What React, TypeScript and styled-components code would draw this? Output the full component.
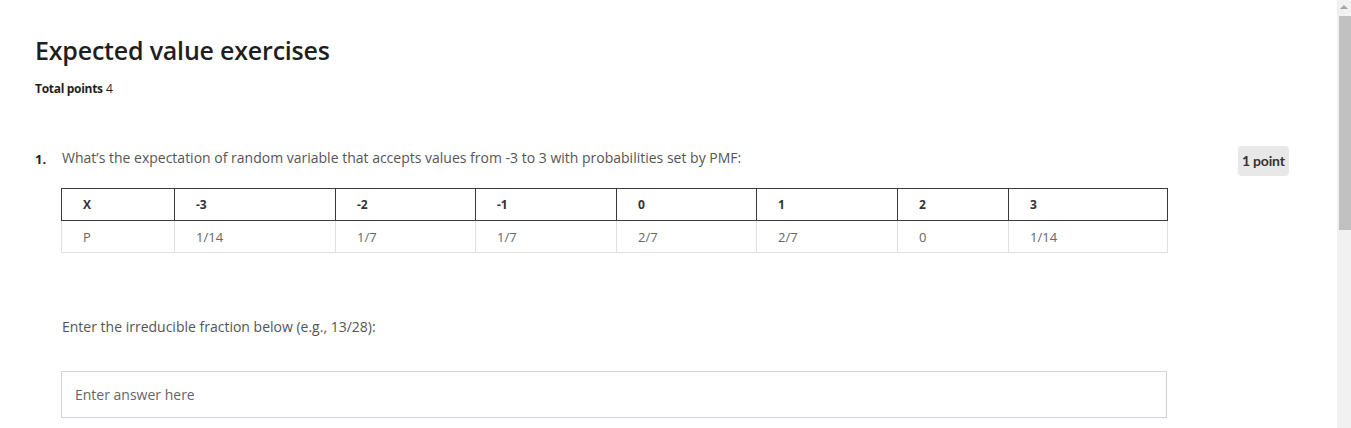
import React from 'react';
import styled, { createGlobalStyle } from 'styled-components';

const GlobalStyle = createGlobalStyle`
	html, body {
		margin: 0;
		padding: 0;
		background: #ffffff;
		overflow: hidden;
	}
	body {
		font-family: 'Open Sans', 'Noto Sans', Arial, sans-serif;
		color: #1f1f1f;
	}
`;

const Page = styled.div`
	display: flex;
	height: 428px;
	overflow: hidden;
`;
const Main = styled.main`
	flex: 1;
	padding: 0 48px 0 35px;
`;
const Title = styled.h1`
	margin: 0;
	padding-top: 33px;
	font-size: 25px;
	line-height: 34px;
	font-weight: 600;
	color: #1f1f1f;
	letter-spacing: -0.2px;
`;
const TotalPoints = styled.div`
	margin-top: 14px;
	font-size: 12px;
	line-height: 16px;
	color: #1f1f1f;
	b {
		font-weight: 700;
		letter-spacing: -0.3px;
	}
`;
const Question = styled.section`
	display: grid;
	grid-template-columns: 27px 1fr auto;
	margin-top: 51px;
`;
const Number = styled.div`
	font-size: 13px;
	font-weight: 700;
	line-height: 20px;
	padding-top: 1px;
	color: #1f1f1f;
`;
const Body = styled.div`
	padding-right: 70px;
`;
const Prompt = styled.p`
	margin: 0;
	font-size: 14px;
	line-height: 20px;
	color: #555555;
`;
const Badge = styled.span`
	align-self: start;
	margin-top: -2px;
	background: #e8e8e8;
	border-radius: 4px;
	padding: 7px 4px;
	font-family: Lato, 'Open Sans', sans-serif;
	font-size: 14px;
	font-weight: 700;
	line-height: 16px;
	color: #333333;
	letter-spacing: -0.2px;
	white-space: nowrap;
`;
const Table = styled.table`
	margin-top: 20px;
	border-collapse: collapse;
	table-layout: fixed;
	width: 1106px;
	margin-left: -1px;
	font-size: 13px;
`;
const Col = styled.col<{ w: number }>`
	width: ${(p) => p.w}px;
`;
const Th = styled.th`
	height: 31px;
	padding: 0 0 0 21px;
	text-align: left;
	font-size: 12px;
	font-weight: 700;
	color: #333333;
	border: 1px solid #3a3a3a;
`;
const Td = styled.td`
	height: 31px;
	padding: 0 0 0 21px;
	text-align: left;
	color: #666666;
	border: 1px solid #e0e0e0;
	border-top: none;
`;
const Hint = styled.p`
	margin: 64px 0 0;
	font-size: 14px;
	line-height: 20px;
	color: #555555;
`;
const Answer = styled.input`
	display: block;
	box-sizing: border-box;
	margin: 34px 0 0 -1px;
	width: 1106px;
	height: 47px;
	border: 1px solid #d1d1d9;
	padding: 0 13px;
	font-family: 'Open Sans', 'Noto Sans', Arial, sans-serif;
	font-size: 14px;
	color: #333333;
	outline: none;
	&::placeholder {
		color: #666666;
	}
`;
const Rail = styled.div`
	width: 15px;
	background: #f1f1f1;
	display: flex;
	flex-direction: column;
	align-items: center;
`;
const Arrow = styled.div`
	margin-top: 5px;
	width: 0;
	height: 0;
	border-left: 4px solid transparent;
	border-right: 4px solid transparent;
	border-bottom: 4px solid #a3a3a3;
`;
const Thumb = styled.div`
	margin-top: 7px;
	width: 12px;
	height: 214px;
	background: #c1c1c1;
	margin-left: 2px;
`;

const xs = ['X', '-3', '-2', '-1', '0', '1', '2', '3'];
const ps = ['P', '1/14', '1/7', '1/7', '2/7', '2/7', '0', '1/14'];
const widths = [113, 161, 140, 141, 140, 141, 111, 159];

const App = () => {
	return (
		<Page>
			<GlobalStyle />
			<Main>
				<Title>Expected value exercises</Title>
				<TotalPoints>
					<b>Total points</b> 4
				</TotalPoints>
				<Question>
					<Number>1.</Number>
					<Body>
						<Prompt>
							What’s the expectation of random variable that accepts values from -3 to 3 with probabilities set by PMF:
						</Prompt>
						<Table>
							<colgroup>
								{widths.map((w, i) => (
									<Col key={i} w={w} />
								))}
							</colgroup>
							<thead>
								<tr>
									{xs.map((x, i) => (
										<Th key={i}>{x}</Th>
									))}
								</tr>
							</thead>
							<tbody>
								<tr>
									{ps.map((p, i) => (
										<Td key={i}>{p}</Td>
									))}
								</tr>
							</tbody>
						</Table>
						<Hint>Enter the irreducible fraction below (e.g., 13/28):</Hint>
						<Answer placeholder="Enter answer here" />
					</Body>
					<Badge>1 point</Badge>
				</Question>
			</Main>
			<Rail>
				<Arrow />
				<Thumb />
			</Rail>
		</Page>
	);
};
export default App;
